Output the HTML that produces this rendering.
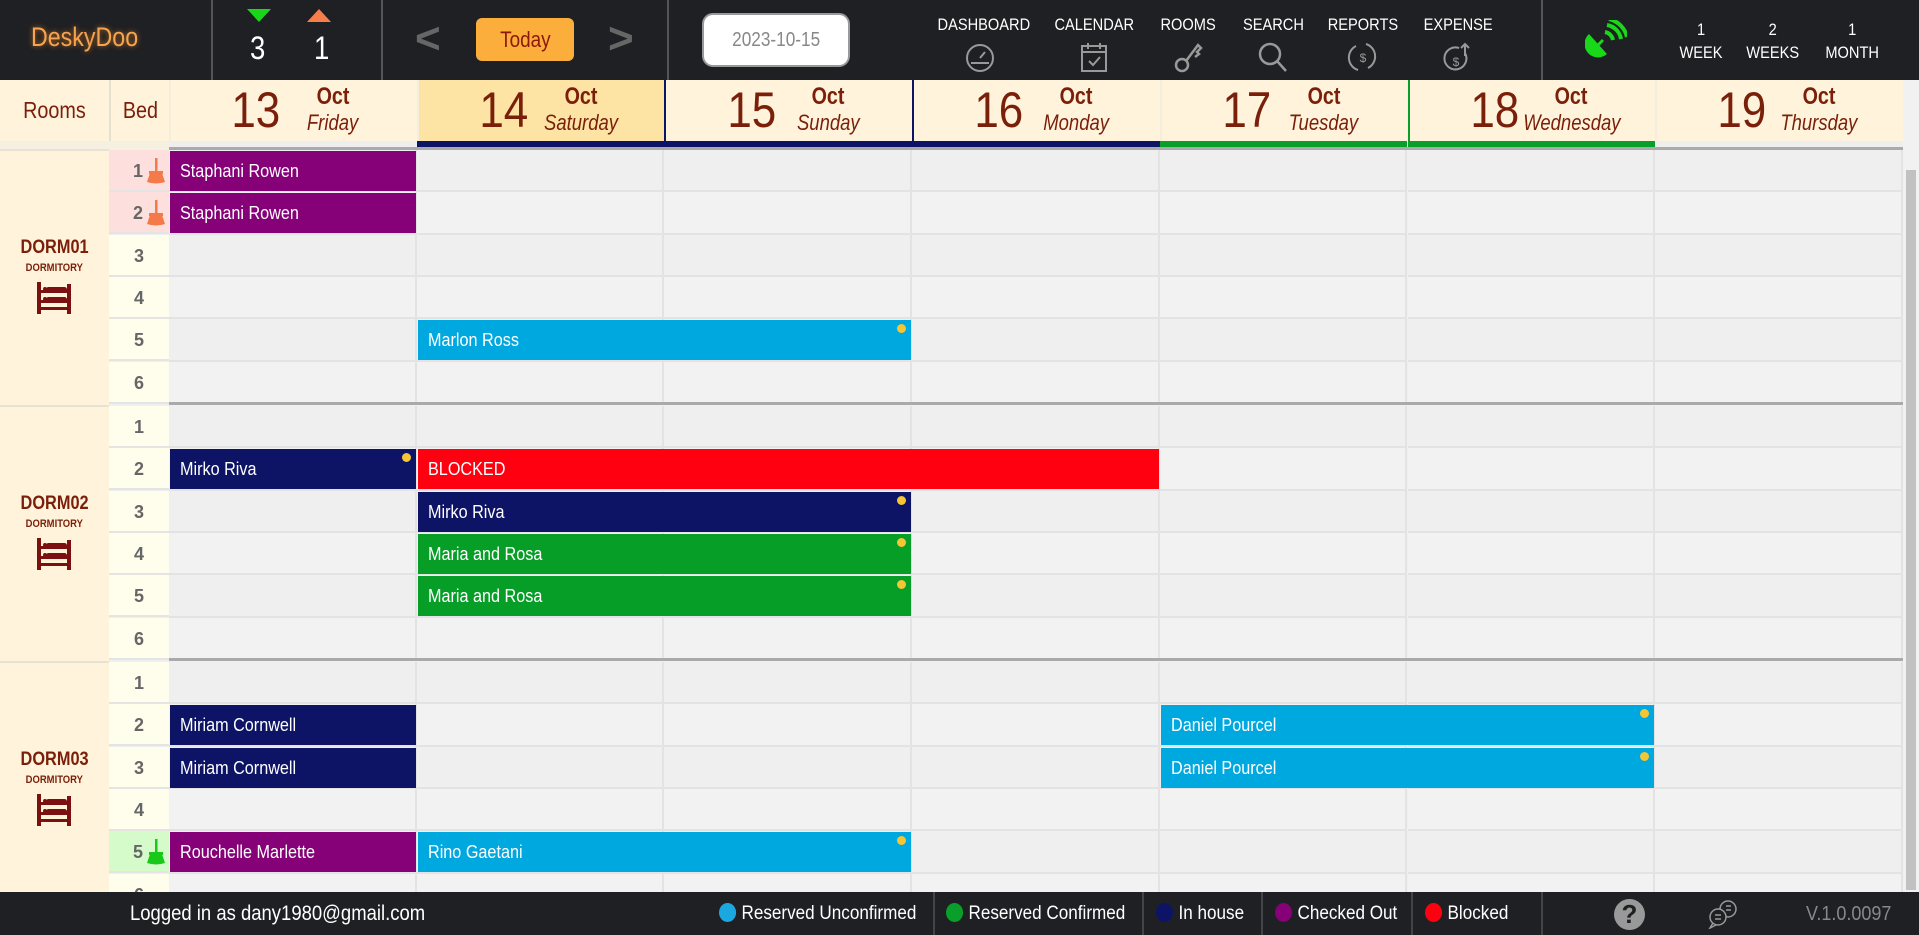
<!DOCTYPE html>
<html><head><meta charset="utf-8">
<style>
*{box-sizing:border-box}
body{margin:0;width:1919px;height:935px;overflow:hidden;background:#efefef;font-family:"Liberation Sans Narrow","Liberation Sans",sans-serif;font-stretch:condensed;position:relative}
.a{position:absolute}
.sx{display:inline-block;transform:scaleX(.86);transform-origin:center}
.sl{display:inline-block;transform:scaleX(.86);transform-origin:left}
#top{left:0;top:0;width:1919px;height:80px;background:#1f2024}
.vs{position:absolute;top:0;width:2px;height:80px;background:#555}
.nav{position:absolute;top:15px;color:#fff;font-size:17px;text-align:center;width:100px;margin-left:-50px}
.nav svg{display:block;margin:6px auto 0}
.dh{position:absolute;top:80px;height:61px;background:#fff3dc;color:#7a1f0a}
.dh .n{position:absolute;left:40px;top:4px;font-size:50px;line-height:52px;width:90px;text-align:center}
.dh .n span{display:inline-block;transform:scaleX(.88)}
.dh .m{position:absolute;left:120px;top:3px;font-size:24px;font-weight:bold;width:84px;text-align:center}
.dh .m span{display:inline-block;transform:scaleX(.82)}
.dh .w{position:absolute;left:102px;top:30px;font-size:22px;font-style:italic;width:120px;text-align:center}
.dh .w span{display:inline-block;transform:scaleX(.84)}
.bk{position:absolute;height:40px;color:#fff;font-size:18px;line-height:40px;padding-left:10px;white-space:nowrap}
.bk span.t{display:inline-block;transform:scaleX(.9);transform-origin:left}
.dot{position:absolute;right:5px;top:4px;width:9px;height:9px;border-radius:50%;background:#f5c634}
.bed{position:absolute;left:109px;width:60px;height:42px;color:#666;font-weight:bold;font-size:18px;line-height:42px;text-align:center;border-bottom:2px solid #e4e4e4}
#foot{left:0;top:892px;width:1919px;height:43px;background:#1f2024;color:#fff;font-size:19px}
.lg{position:absolute;top:11px;white-space:nowrap;transform:scaleX(.9);transform-origin:left}
.lg i{display:inline-block;width:19px;height:19px;border-radius:50%;vertical-align:-3px;margin-right:6px}
.fs{position:absolute;top:0;width:2px;height:43px;background:#444}
</style></head><body>
<div id="top" class="a">
 <div class="a" style="left:31px;top:22px;font-size:27px;color:#f7a44e;text-shadow:0 0 6px rgba(247,140,40,.7)"><span class="sl">DeskyDoo</span></div>
 <div class="vs" style="left:211px"></div>
 <svg class="a" style="left:247px;top:9px" width="24" height="14"><polygon points="0,0 24,0 12,13" fill="#19d719"/></svg>
 <svg class="a" style="left:307px;top:9px" width="24" height="14"><polygon points="0,13 24,13 12,0" fill="#f57e4a"/></svg>
 <div class="a" style="left:250px;top:30px;color:#fff;font-size:32px"><span class="sl">3</span></div>
 <div class="a" style="left:314px;top:30px;color:#fff;font-size:32px"><span class="sl">1</span></div>
 <div class="vs" style="left:381px"></div>
 <div class="a" style="left:415px;top:14px;color:#666;font-size:44px;font-weight:bold">&lt;</div>
 <div class="a" style="left:476px;top:18px;width:98px;height:43px;background:#fbae3c;border-radius:6px;color:#8b1a0a;font-size:22px;line-height:43px;text-align:center"><span class="sx">Today</span></div>
 <div class="a" style="left:608px;top:14px;color:#666;font-size:44px;font-weight:bold">&gt;</div>
 <div class="vs" style="left:667px"></div>
 <div class="a" style="left:702px;top:13px;width:148px;height:54px;background:#fff;border:2px solid #999;border-radius:11px;color:#888;font-size:20px;line-height:50px;text-align:center"><span class="sx">2023-10-15</span></div>
 <div class="nav" style="left:980px"><span class="sx">DASHBOARD</span><svg width="34" height="32" viewBox="0 0 34 32" fill="none" stroke="#999" stroke-width="2"><circle cx="17" cy="17" r="13"/><path d="M17 17l5-6M8 22h18"/></svg></div>
 <div class="nav" style="left:1094px"><span class="sx">CALENDAR</span><svg width="34" height="32" viewBox="0 0 34 32" fill="none" stroke="#999" stroke-width="2"><rect x="5" y="5" width="24" height="25"/><path d="M5 11h24M11 2v6M23 2v6M12 20l4 4 7-8"/></svg></div>
 <div class="nav" style="left:1188px"><span class="sx">ROOMS</span><svg width="34" height="32" viewBox="0 0 34 32" fill="none" stroke="#999" stroke-width="2.5"><circle cx="11" cy="24" r="6"/><path d="M15 20l12-16 3 3-4 4 2 2-4 3"/></svg></div>
 <div class="nav" style="left:1273px"><span class="sx">SEARCH</span><svg width="34" height="32" viewBox="0 0 34 32" fill="none" stroke="#999" stroke-width="2.5"><circle cx="14" cy="13" r="10"/><path d="M21 20l9 10"/></svg></div>
 <div class="nav" style="left:1363px"><span class="sx">REPORTS</span><svg width="34" height="32" viewBox="0 0 34 32" fill="none" stroke="#999" stroke-width="2"><path d="M10 5a13 13 0 0 0 2 24M22 27a13 13 0 0 0-2-24"/><text x="17" y="21" font-size="12" fill="#999" stroke="none" text-anchor="middle" font-family="Liberation Sans">$</text></svg></div>
 <div class="nav" style="left:1458px"><span class="sx">EXPENSE</span><svg width="34" height="32" viewBox="0 0 34 32" fill="none" stroke="#999" stroke-width="2"><path d="M24 12a11 11 0 1 1-6-5M24 3v12M20 7l4-4 4 4"/><text x="15" y="25" font-size="12" fill="#999" stroke="none" text-anchor="middle" font-family="Liberation Sans">$</text></svg></div>
 <div class="vs" style="left:1541px"></div>
 <svg class="a" style="left:1585px;top:20px" width="42" height="42" viewBox="0 0 42 42"><path d="M4 14 L22 34 A13 13 0 0 1 4 14Z" fill="#19d719"/><path d="M12 26l6-6" stroke="#19d719" stroke-width="3"/><path d="M20 12a10 10 0 0 1 8 8M22 5a17 17 0 0 1 14 14M24 -1a24 24 0 0 1 18 18" stroke="#19d719" stroke-width="4" fill="none"/></svg>
 <div class="nav" style="left:1701px;top:18px;width:70px;margin-left:-35px;line-height:23px"><span class="sx">1<br>WEEK</span></div>
 <div class="nav" style="left:1773px;top:18px;width:70px;margin-left:-35px;line-height:23px"><span class="sx">2<br>WEEKS</span></div>
 <div class="nav" style="left:1852px;top:18px;width:80px;margin-left:-40px;line-height:23px"><span class="sx">1<br>MONTH</span></div>
</div>
<div class="a" style="left:0;top:80px;width:109px;height:61px;background:#fff3dc;color:#7a1f0a;font-size:23px;line-height:61px;text-align:center"><span class="sx">Rooms</span></div>
<div class="a" style="left:109px;top:80px;width:60px;height:61px;background:#fff3dc;color:#7a1f0a;font-size:23px;line-height:61px;text-align:center;border-left:2px solid #e6e0d0"><span class="sx">Bed</span></div>
<div class="a" style="left:0;top:141px;width:169px;height:9px;background:#f5f0e0"></div>
<div class="a" style="left:169px;top:147px;width:1734px;height:3px;background:#aaa"></div>
<div class="a" style="left:1903px;top:80px;width:16px;height:812px;background:#f1f1f1"></div>
<div class="a" style="left:1906px;top:170px;width:10px;height:720px;background:#c1c1c1"></div>
<div id="g"></div>
<div id="foot" class="a">
 <div class="lg" style="left:130px;font-size:21px;top:10px;transform:scaleX(.88)">Logged in as dany1980@gmail.com</div>
 <div class="lg" style="left:719px"><i style="background:#1ba8e0"></i>Reserved Unconfirmed</div>
 <div class="fs" style="left:933px"></div>
 <div class="lg" style="left:946px"><i style="background:#0a9e2a"></i>Reserved Confirmed</div>
 <div class="fs" style="left:1142px"></div>
 <div class="lg" style="left:1156px"><i style="background:#0d1466"></i>In house</div>
 <div class="fs" style="left:1261px"></div>
 <div class="lg" style="left:1275px"><i style="background:#860078"></i>Checked Out</div>
 <div class="fs" style="left:1411px"></div>
 <div class="lg" style="left:1425px"><i style="background:#ff0010"></i>Blocked</div>
 <div class="fs" style="left:1541px"></div>
 <div class="a" style="left:1614px;top:7px;width:31px;height:31px;border-radius:50%;background:#999;color:#1f2024;font-weight:bold;font-size:26px;line-height:31px;text-align:center;font-family:'Liberation Sans'">?</div>
 <svg class="a" style="left:1706px;top:7px" width="36" height="30" viewBox="0 0 36 30" fill="none" stroke="#999" stroke-width="1.5"><circle cx="22" cy="10" r="8"/><circle cx="12" cy="18" r="8" fill="#1f2024"/><path d="M7 24l-3 5 6-3M9 16h6M9 20h6M20 7h5M20 11h5"/></svg>
 <div class="lg" style="left:1806px;color:#888;font-size:20px">V.1.0.0097</div>
</div>
<script>
var g=document.getElementById('g'),h='';
var X0=169,W=247.7,G=[150,406,662],R=42.35;
var days=[['13','Friday'],['14','Saturday'],['15','Sunday'],['16','Monday'],['17','Tuesday'],['18','Wednesday'],['19','Thursday']];
days.forEach(function(d,i){var x=X0+i*W;
h+='<div class="dh" style="left:'+x+'px;width:'+W+'px;'+(i==1?'background:#fde3a4;':'')+'border-left:2px solid '+(i==2||i==3?'#0d1466':i==5?'#0a9e2a':'#f5eedd')+'"><div class="n"><span>'+d[0]+'</span></div><div class="m"><span>Oct</span></div><div class="w"><span>'+d[1]+'</span></div></div>';
var c=(i>=1&&i<=3)?'#0d1466':(i==4||i==5)?'#0a9e2a':'#eee';
h+='<div class="a" style="left:'+x+'px;top:141px;width:'+W+'px;height:6px;background:'+c+'"></div>';});
for(var k=0;k<3;k++){var y0=G[k];
h+='<div class="a" style="left:0;top:'+(y0-1)+'px;width:109px;height:'+(6*R+3)+'px;background:#fff3dc;border-top:2px solid #e8e2d6"></div>';
h+='<div class="a" style="left:0;top:'+(y0+87)+'px;width:109px;text-align:center;color:#7a1f0a;font-weight:bold;font-size:19px;font-family:\'Liberation Sans\'"><span class="sx">DORM0'+(k+1)+'</span></div>';
h+='<div class="a" style="left:0;top:'+(y0+112)+'px;width:109px;text-align:center;color:#7a1f0a;font-weight:bold;font-size:11px;font-family:\'Liberation Sans\'"><span class="sx">DORMITORY</span></div>';
h+='<svg class="a" style="left:37px;top:'+(y0+132)+'px" width="34" height="32" viewBox="0 0 34 32"><rect x="0" y="0" width="4" height="32" fill="#7a1010"/><rect x="30" y="2" width="4" height="30" fill="#7a1010"/><rect x="0" y="25" width="34" height="3" fill="#7a1010"/><rect x="2" y="8" width="32" height="3" fill="#7a1010"/><rect x="9" y="5" width="21" height="5" rx="2.5" fill="#7a1010"/><rect x="9" y="15" width="21" height="5" rx="2.5" fill="#7a1010"/><rect x="2" y="18" width="32" height="3" fill="#7a1010"/><circle cx="8" cy="7" r="2" fill="#7a1010"/><circle cx="8" cy="17" r="2" fill="#7a1010"/></svg>';
for(var r=0;r<6;r++){var y=y0+r*R;
var bg='#fffdec';if(k==0&&r<2)bg='#fde0dd';if(k==2&&r==4)bg='#d4fbc9';
var br=(k==0&&r<2)||(k==2&&r==4);
h+='<div class="bed" style="top:'+y+'px;background:'+bg+';'+(br?'text-align:left;padding-left:24px':'')+'">'+(r+1)+'</div>';
if(br){var bc=k==0?'#f47a4a':'#19c919';h+='<svg class="a" style="left:147px;top:'+(y+8)+'px" width="18" height="26" viewBox="0 0 18 26"><rect x="8" y="0" width="2.5" height="13" fill="'+bc+'"/><path d="M3 15h12l3 9q-9 3-18 0z" fill="'+bc+'"/><rect x="2" y="13" width="14" height="3" fill="'+bc+'"/></svg>';}
for(var c=0;c<7;c++){h+='<div class="a" style="left:'+(X0+c*W)+'px;top:'+y+'px;width:'+W+'px;height:'+R+'px;background:'+(r%2?'#f2f2f2':'#efefef')+';border-right:2px solid #e3e3e3;border-bottom:2px solid #e3e3e3"></div>';}}
h+='<div class="a" style="left:169px;top:'+(y0+6*R-2)+'px;width:1734px;height:3px;background:#aaa"></div>';}
function bk(k,r,c0,c1,col,name,dot){var x=X0+c0*W+1,w=(c1-c0+1)*W-2,y=G[k]+r*R+1;
h+='<div class="bk" style="left:'+x+'px;top:'+y+'px;width:'+w+'px;background:'+col+'"><span class="t">'+name+'</span>'+(dot?'<span class="dot"></span>':'')+'</div>';}
var P='#860078',B='#00a8e0',N='#0d1466',GR='#069e27',RD='#ff0010';
bk(0,0,0,0,P,'Staphani Rowen');bk(0,1,0,0,P,'Staphani Rowen');bk(0,4,1,2,B,'Marlon Ross',1);
bk(1,1,0,0,N,'Mirko Riva',1);bk(1,1,1,3,RD,'BLOCKED');bk(1,2,1,2,N,'Mirko Riva',1);bk(1,3,1,2,GR,'Maria and Rosa',1);bk(1,4,1,2,GR,'Maria and Rosa',1);
bk(2,1,0,0,N,'Miriam Cornwell');bk(2,1,4,5,B,'Daniel Pourcel',1);bk(2,2,0,0,N,'Miriam Cornwell');bk(2,2,4,5,B,'Daniel Pourcel',1);
bk(2,4,0,0,P,'Rouchelle Marlette');bk(2,4,1,2,B,'Rino Gaetani',1);
g.innerHTML=h;
</script>
</body></html>
